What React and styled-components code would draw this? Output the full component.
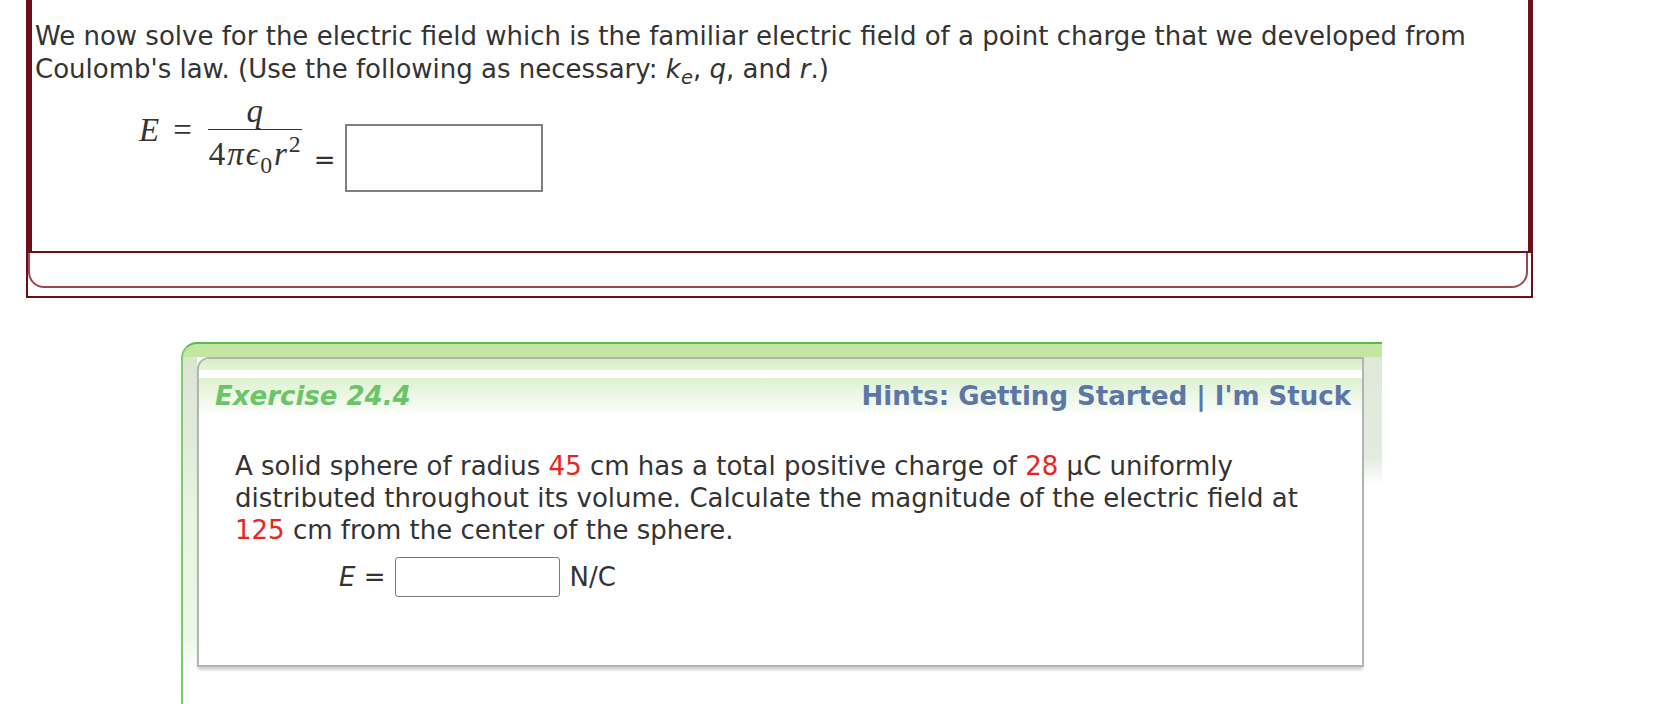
import React from "react";
import styled, { createGlobalStyle } from "styled-components";

const GlobalStyle = createGlobalStyle`
  html, body {
    margin: 0;
    padding: 0;
    background: #fff;
  }
  body {
    font-family: "DejaVu Sans", Verdana, sans-serif;
    color: #333;
  }
`;

const Page = styled.div`
  width: 1660px;
  height: 728px;
  overflow: hidden;
`;

// Top (maroon) problem part
const ProblemBox = styled.div`
  margin-left: 26px;
  width: 1507px;
  box-sizing: border-box;
  border: 2px solid #6b0f1a;
  border-top: none;
  padding-bottom: 8px;
`;

const ProblemBody = styled.div`
  height: 253px;
  box-sizing: border-box;
  border-left: 4px solid #6b0f1a;
  border-right: 3px solid #6b0f1a;
  border-bottom: 2px solid #6b0f1a;
  padding: 20px 0 0 3px;
`;

const ProblemFooter = styled.div`
  height: 35px;
  box-sizing: border-box;
  margin-right: 3px;
  border: 2px solid #9b4855;
  border-top: none;
  border-radius: 0 0 16px 16px;
`;

const Prose = styled.p`
  margin: 0;
  font-size: 26px;
  line-height: ${(p) => p.$lh || 33}px;
  color: #333;
  white-space: nowrap;
`;

const Var = styled.i`
  font-style: italic;
  sub {
    font-size: 0.75em;
    line-height: 0;
  }
`;

const FormulaRow = styled.div`
  display: flex;
  align-items: center;
  margin-top: 6px;
  padding-left: 104px;
`;

const MathGroup = styled.div`
  display: flex;
  align-items: center;
  margin-bottom: 54px;
  font-family: "Liberation Serif", "Times New Roman", serif;
  font-size: 33px;
  color: #333;
`;

const MathSym = styled.span`
  font-style: ${(p) => (p.$upright ? "normal" : "italic")};
  margin: ${(p) => p.$m || "0"};
  sub,
  sup {
    font-style: normal;
    font-size: 0.72em;
    line-height: 0;
  }
  sub {
    margin-left: 1px;
  }
  sup {
    margin-left: 2px;
    vertical-align: 0.55em;
  }
`;

const Fraction = styled.span`
  display: inline-flex;
  flex-direction: column;
  align-items: center;
  margin: 4px 0 0 16px;
`;

const Numer = styled.span`
  font-style: italic;
  line-height: 30px;
  padding-bottom: 3px;
`;

const Denom = styled.span`
  display: flex;
  align-items: baseline;
  gap: 2px;
  line-height: 30px;
  padding: 9px 1px 0;
  border-top: 1.5px solid #333;
`;

const Eq = styled.span`
  font-size: 26px;
  margin: 0 9px 0 12px;
  padding-top: 4px;
`;

const BigInput = styled.div`
  width: 198px;
  height: 68px;
  box-sizing: border-box;
  border: 2px solid #808080;
`;

// Green exercise card
const Card = styled.div`
  margin: 44px 0 0 181px;
  width: 1201px;
  height: 362px;
  box-sizing: border-box;
  border-top: 2px solid #5cb94c;
  border-left: 2px solid #7bcf6b;
  border-top-left-radius: 16px;
  padding-top: 13px;
  display: flex;
  align-items: flex-start;
  background: linear-gradient(#c3e7a2, #c3e7a2) top left / 100% 13px no-repeat;
`;

const Rail = styled.div`
  width: ${(p) => p.$w}px;
  align-self: stretch;
  background: ${(p) =>
    p.$side === "left"
      ? "linear-gradient(to bottom, #d4ebc6 0, #dde6d8 20px, #e2ecdc 90px, #e9f4e2 160px, #edf7e8 280px, #fff 320px)"
      : "linear-gradient(to bottom, #dfe9d8 0, #e3ebdf 100px, #fff 128px)"};
`;

const Panel = styled.div`
  flex: 1;
  height: 310px;
  box-sizing: border-box;
  background: #fff;
  border: 2px solid #b3b3b3;
  border-radius: 12px 0 0 0;
  box-shadow: 0 4px 3px -1px rgba(0, 0, 0, 0.18);
  display: flex;
  flex-direction: column;
`;

const PanelShade = styled.div`
  height: 11px;
  border-top-left-radius: 10px;
  background: linear-gradient(to bottom, #d5eec3, #e4f4d9);
`;

const Header = styled.div`
  margin-top: 8px;
  height: 35px;
  display: flex;
  align-items: center;
  justify-content: space-between;
  padding: 2px 11px 0 16px;
  box-sizing: border-box;
  background: linear-gradient(to bottom, #ddf1d0, #f0f9ea 60%, #fbfdf9);
  font-size: 26px;
  font-weight: bold;
  line-height: 33px;
`;

const ExerciseTitle = styled.span`
  color: #6cc46a;
  font-style: italic;
`;

const Hints = styled.span`
  color: #5d76a8;
`;

const Content = styled.div`
  padding: 37px 0 0 36px;
`;

const Num = styled.span`
  color: #e8261e;
`;

const AnswerRow = styled.div`
  display: flex;
  align-items: center;
  margin-top: 11px;
  padding-left: 104px;
  font-size: 26px;
  color: #333;
`;

const SmallInput = styled.div`
  width: 165px;
  height: 40px;
  box-sizing: border-box;
  border: 1px solid #7a7a7a;
  border-radius: 3px;
  margin: 0 10px 0 9px;
`;

export default function App() {
  return (
    <Page>
      <GlobalStyle />
      <ProblemBox>
        <ProblemBody>
          <Prose>
            We now solve for the electric field which is the familiar electric
            field of a point charge that we developed from
            <br />
            Coulomb's law. (Use the following as necessary:{" "}
            <Var>
              k<sub>e</sub>
            </Var>
            , <Var>q</Var>, and <Var>r</Var>.)
          </Prose>
          <FormulaRow>
            <MathGroup>
              <MathSym>E</MathSym>
              <MathSym $upright $m="0 0 0 14px">
                =
              </MathSym>
              <Fraction>
                <Numer>q</Numer>
                <Denom>
                  <MathSym $upright>4</MathSym>
                  <MathSym>π</MathSym>
                  <MathSym>
                    ϵ<sub>0</sub>
                  </MathSym>
                  <MathSym>
                    r<sup>2</sup>
                  </MathSym>
                </Denom>
              </Fraction>
            </MathGroup>
            <Eq>=</Eq>
            <BigInput />
          </FormulaRow>
        </ProblemBody>
        <ProblemFooter />
      </ProblemBox>

      <Card>
        <Rail $side="left" $w={14} />
        <Panel>
          <PanelShade />
          <Header>
            <ExerciseTitle>Exercise 24.4</ExerciseTitle>
            <Hints>Hints: Getting Started | I'm Stuck</Hints>
          </Header>
          <Content>
            <Prose $lh={32}>
              A solid sphere of radius <Num>45</Num> cm has a total positive
              charge of <Num>28</Num> µC uniformly
              <br />
              distributed throughout its volume. Calculate the magnitude of the
              electric field at
              <br />
              <Num>125</Num> cm from the center of the sphere.
            </Prose>
            <AnswerRow>
              <Var>E</Var>&nbsp;=
              <SmallInput />
              N/C
            </AnswerRow>
          </Content>
        </Panel>
        <Rail $side="right" $w={18} />
      </Card>
    </Page>
  );
}
